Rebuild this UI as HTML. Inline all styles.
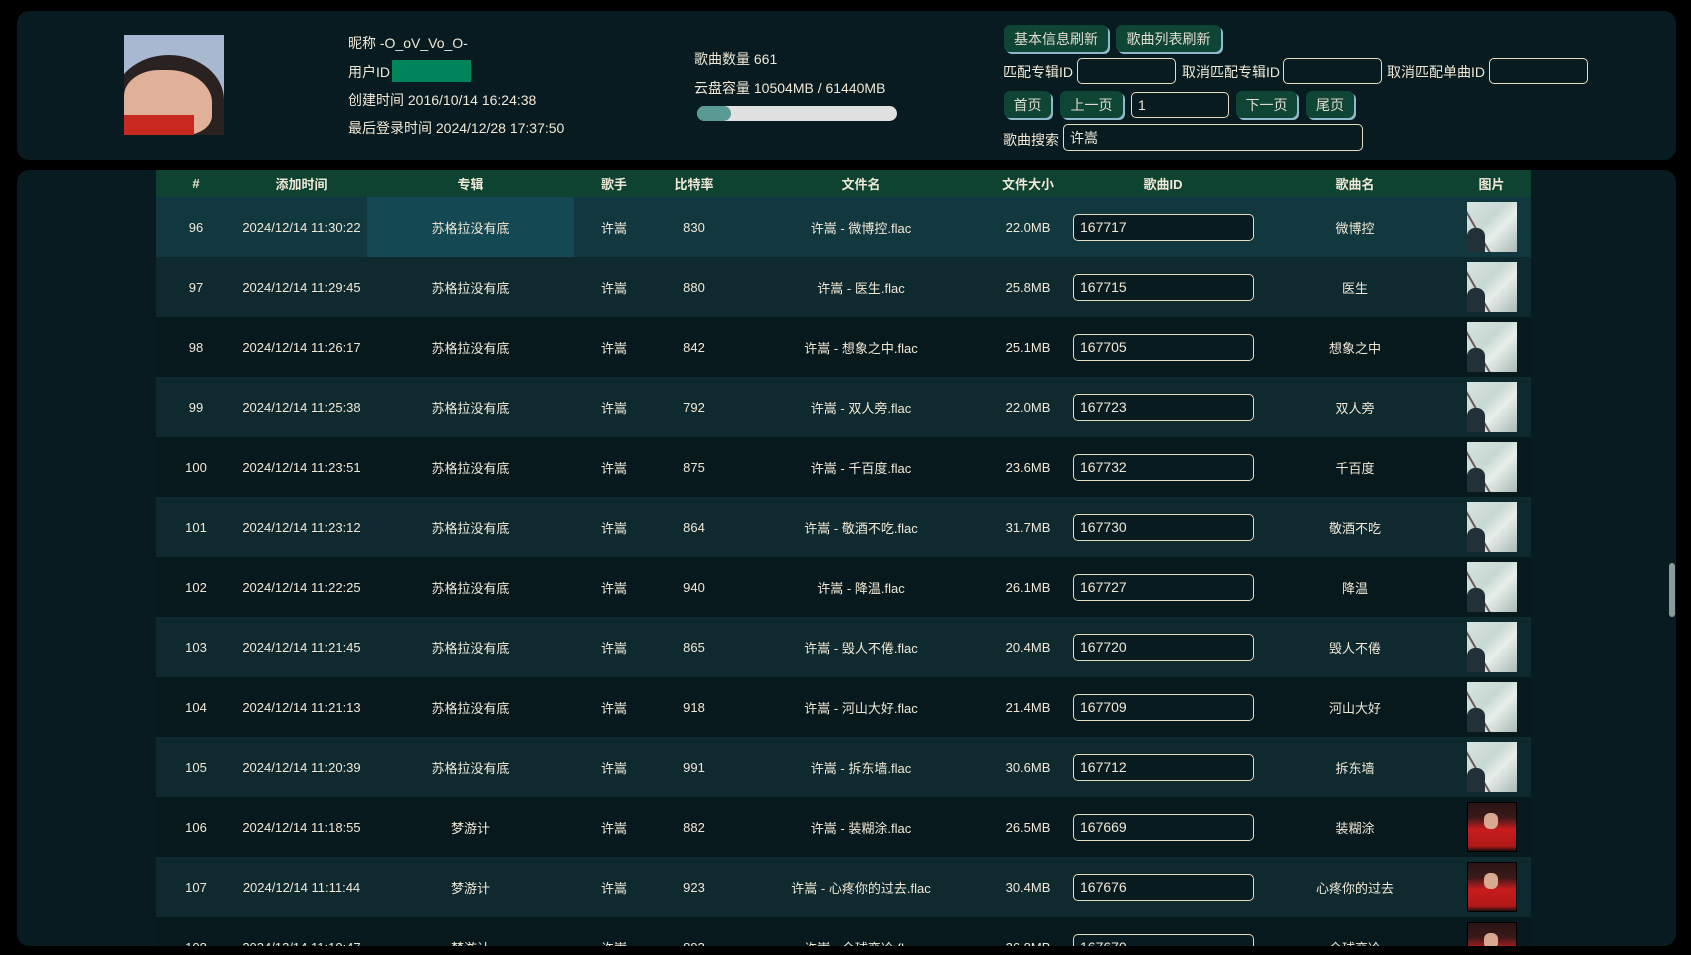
<!DOCTYPE html>
<html><head><meta charset="utf-8"><style>
*{box-sizing:border-box;margin:0;padding:0}
body{width:1691px;height:955px;background:#000;overflow:hidden;font-family:"Liberation Sans","Noto Sans CJK SC",sans-serif;color:#f0e8d6;font-size:14px;position:relative}
.p{position:absolute;background:#081b20;border-radius:12px}
.a{position:absolute;white-space:nowrap}
.btn{position:absolute;background:#0f4535;border-radius:6px;box-shadow:2px 2px 0 #8fb8c8;color:#e0dcd0;font-size:14px;display:flex;align-items:center;justify-content:center}
.inp{position:absolute;background:#081b20;border:1px solid #e8dcc0;border-radius:5px;padding-left:6px;display:flex;align-items:center;font-size:14px}
table{position:absolute;left:156px;top:170px;border-collapse:collapse;table-layout:fixed;width:1375px}
th{background:#0e4231;height:27px;font-weight:bold;font-size:13px;text-align:center}
td{height:60px;text-align:center;font-size:13px;padding:0}
tr.o td{background:#0e2a2f}
tr.e td{background:#08191e}
tr.h td{background:#12383f}
tr.h td.al{background:#144852}
td .i{width:181px;height:27px;border:1px solid #e8dcc0;border-radius:5px;background:#081b20;margin-left:5px;text-align:left;padding-left:6px;line-height:25px;font-size:14px}
.c1{width:50px;height:50px;margin:0 auto;background:linear-gradient(135deg,#d8e4e0 0%,#c8d8d2 40%,#e8eeea 60%,#a8b8b4 100%);position:relative;overflow:hidden}
.c1:after{content:"";position:absolute;left:0;bottom:0;width:18px;height:24px;background:#223038;border-radius:8px 8px 0 0}
.c1:before{content:"";position:absolute;left:10px;top:-5px;width:2px;height:70px;background:#6a5a58;transform:rotate(-30deg)}
.c2{width:50px;height:50px;margin:0 auto;background:linear-gradient(180deg,#2a1414 0,#3a1a1a 30%,#c81c1c 55%,#b01818 90%,#1a0e0e 100%);border:1px solid #000;position:relative}
.c2:after{content:"";position:absolute;left:16px;top:10px;width:14px;height:16px;background:#d8a890;border-radius:6px}
</style></head><body>
<div class="p" style="left:17px;top:11px;width:1659px;height:149px"></div>
<div class="a" style="left:124px;top:35px;width:100px;height:100px;background:#a8b8d0;overflow:hidden">
<div style="position:absolute;left:-10px;top:20px;width:110px;height:90px;background:#2a2220;border-radius:50% 50% 0 0"></div>
<div style="position:absolute;left:0;top:35px;width:88px;height:65px;background:#e0b098;border-radius:40% 50% 30% 30%"></div>
<div style="position:absolute;left:0;top:80px;width:70px;height:20px;background:#c82820"></div>
</div>
<div class="a" style="left:348px;top:33px">昵称 -O_oV_Vo_O-</div>
<div class="a" style="left:348px;top:62px">用户ID</div>
<div class="a" style="left:392px;top:60px;width:79px;height:22px;background:#00855a"></div>
<div class="a" style="left:348px;top:90px">创建时间 2016/10/14 16:24:38</div>
<div class="a" style="left:348px;top:118px">最后登录时间 2024/12/28 17:37:50</div>
<div class="a" style="left:694px;top:49px">歌曲数量 661</div>
<div class="a" style="left:694px;top:78px">云盘容量 10504MB / 61440MB</div>
<div class="a" style="left:697px;top:106px;width:200px;height:15px;background:#e0e0e0;border-radius:8px;overflow:hidden"><div style="width:34px;height:15px;background:#5a9a94;border-radius:8px"></div></div>
<div class="btn" style="left:1004px;top:25px;width:104px;height:27px">基本信息刷新</div>
<div class="btn" style="left:1116px;top:25px;width:105px;height:27px">歌曲列表刷新</div>
<div class="a" style="left:1003px;top:62px">匹配专辑ID</div>
<div class="inp" style="left:1077px;top:58px;width:99px;height:26px"></div>
<div class="a" style="left:1182px;top:62px">取消匹配专辑ID</div>
<div class="inp" style="left:1283px;top:58px;width:99px;height:26px"></div>
<div class="a" style="left:1387px;top:62px">取消匹配单曲ID</div>
<div class="inp" style="left:1489px;top:58px;width:99px;height:26px"></div>
<div class="btn" style="left:1004px;top:91px;width:47px;height:27px">首页</div>
<div class="btn" style="left:1060px;top:91px;width:63px;height:27px">上一页</div>
<div class="inp" style="left:1131px;top:92px;width:98px;height:26px">1</div>
<div class="btn" style="left:1236px;top:91px;width:61px;height:27px">下一页</div>
<div class="btn" style="left:1306px;top:91px;width:48px;height:27px">尾页</div>
<div class="a" style="left:1003px;top:130px">歌曲搜索</div>
<div class="inp" style="left:1063px;top:124px;width:300px;height:27px">许嵩</div>
<div class="p" style="left:17px;top:170px;width:1659px;height:776px;overflow:hidden">
<table style="left:139px;top:0">
<colgroup><col style="width:80px"><col style="width:131px"><col style="width:207px"><col style="width:80px"><col style="width:80px"><col style="width:254px"><col style="width:80px"><col style="width:190px"><col style="width:194px"><col style="width:79px"></colgroup>
<tr><th>#</th><th>添加时间</th><th>专辑</th><th>歌手</th><th>比特率</th><th>文件名</th><th>文件大小</th><th>歌曲ID</th><th>歌曲名</th><th>图片</th></tr>
<tr class="h"><td>96</td><td>2024/12/14 11:30:22</td><td class="al">苏格拉没有底</td><td>许嵩</td><td>830</td><td>许嵩 - 微博控.flac</td><td>22.0MB</td><td><div class="i">167717</div></td><td>微博控</td><td><div class="c1"></div></td></tr>
<tr class="o"><td>97</td><td>2024/12/14 11:29:45</td><td>苏格拉没有底</td><td>许嵩</td><td>880</td><td>许嵩 - 医生.flac</td><td>25.8MB</td><td><div class="i">167715</div></td><td>医生</td><td><div class="c1"></div></td></tr>
<tr class="e"><td>98</td><td>2024/12/14 11:26:17</td><td>苏格拉没有底</td><td>许嵩</td><td>842</td><td>许嵩 - 想象之中.flac</td><td>25.1MB</td><td><div class="i">167705</div></td><td>想象之中</td><td><div class="c1"></div></td></tr>
<tr class="o"><td>99</td><td>2024/12/14 11:25:38</td><td>苏格拉没有底</td><td>许嵩</td><td>792</td><td>许嵩 - 双人旁.flac</td><td>22.0MB</td><td><div class="i">167723</div></td><td>双人旁</td><td><div class="c1"></div></td></tr>
<tr class="e"><td>100</td><td>2024/12/14 11:23:51</td><td>苏格拉没有底</td><td>许嵩</td><td>875</td><td>许嵩 - 千百度.flac</td><td>23.6MB</td><td><div class="i">167732</div></td><td>千百度</td><td><div class="c1"></div></td></tr>
<tr class="o"><td>101</td><td>2024/12/14 11:23:12</td><td>苏格拉没有底</td><td>许嵩</td><td>864</td><td>许嵩 - 敬酒不吃.flac</td><td>31.7MB</td><td><div class="i">167730</div></td><td>敬酒不吃</td><td><div class="c1"></div></td></tr>
<tr class="e"><td>102</td><td>2024/12/14 11:22:25</td><td>苏格拉没有底</td><td>许嵩</td><td>940</td><td>许嵩 - 降温.flac</td><td>26.1MB</td><td><div class="i">167727</div></td><td>降温</td><td><div class="c1"></div></td></tr>
<tr class="o"><td>103</td><td>2024/12/14 11:21:45</td><td>苏格拉没有底</td><td>许嵩</td><td>865</td><td>许嵩 - 毁人不倦.flac</td><td>20.4MB</td><td><div class="i">167720</div></td><td>毁人不倦</td><td><div class="c1"></div></td></tr>
<tr class="e"><td>104</td><td>2024/12/14 11:21:13</td><td>苏格拉没有底</td><td>许嵩</td><td>918</td><td>许嵩 - 河山大好.flac</td><td>21.4MB</td><td><div class="i">167709</div></td><td>河山大好</td><td><div class="c1"></div></td></tr>
<tr class="o"><td>105</td><td>2024/12/14 11:20:39</td><td>苏格拉没有底</td><td>许嵩</td><td>991</td><td>许嵩 - 拆东墙.flac</td><td>30.6MB</td><td><div class="i">167712</div></td><td>拆东墙</td><td><div class="c1"></div></td></tr>
<tr class="e"><td>106</td><td>2024/12/14 11:18:55</td><td>梦游计</td><td>许嵩</td><td>882</td><td>许嵩 - 装糊涂.flac</td><td>26.5MB</td><td><div class="i">167669</div></td><td>装糊涂</td><td><div class="c2"></div></td></tr>
<tr class="o"><td>107</td><td>2024/12/14 11:11:44</td><td>梦游计</td><td>许嵩</td><td>923</td><td>许嵩 - 心疼你的过去.flac</td><td>30.4MB</td><td><div class="i">167676</div></td><td>心疼你的过去</td><td><div class="c2"></div></td></tr>
<tr class="e"><td>108</td><td>2024/12/14 11:10:47</td><td>梦游计</td><td>许嵩</td><td>893</td><td>许嵩 - 全球变冷.flac</td><td>26.8MB</td><td><div class="i">167670</div></td><td>全球变冷</td><td><div class="c2"></div></td></tr>
</table>
</div>
<div class="a" style="left:1669px;top:563px;width:6px;height:54px;background:#8a9a9c;border-radius:3px"></div>
</body></html>
